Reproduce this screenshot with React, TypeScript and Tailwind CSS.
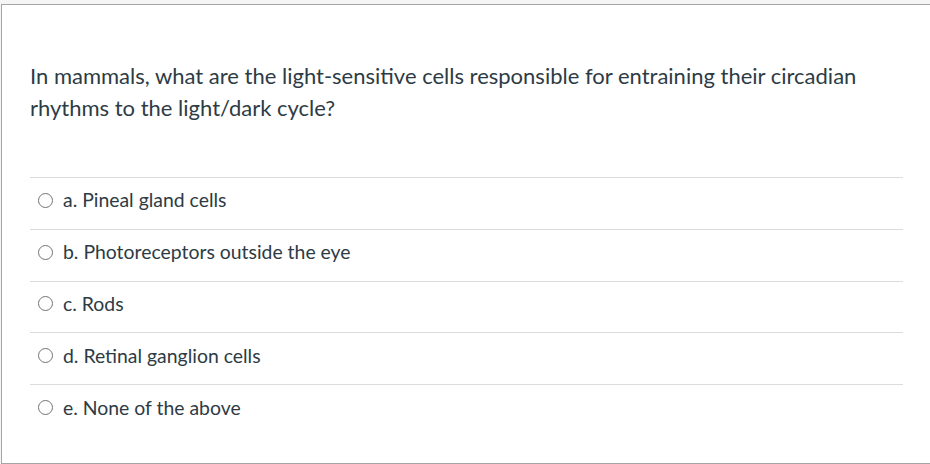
import React from 'react';

const options = [
  'a. Pineal gland cells',
  'b. Photoreceptors outside the eye',
  'c. Rods',
  'd. Retinal ganglion cells',
  'e. None of the above',
];

const App: React.FC = () => {
  return (
    <div className="w-[930px] h-[464px] bg-[#f5f5f5] pt-[4px] overflow-hidden" style={{ fontFamily: 'Lato, "Open Sans", sans-serif' }}>
      <div className="ml-[1px] h-[460px] bg-white border-l border-t border-b border-[#a5a5a5] pl-[28px] pr-[27px] text-[#2d3b45]">
        {/* Question text */}
        <div className="pt-[55px] pb-[53px] text-[22px] leading-[32px]">
          In mammals, what are the light-sensitive cells responsible for entraining their circadian rhythms to the light/dark cycle?
        </div>

        {/* Answers */}
        <div>
          {options.map((opt) => (
            <div key={opt} className="h-[51.8px] border-t border-[#dcdcdc] flex items-center gap-[10px] pl-[8px] pb-[6px]">
              <span className="w-[15px] h-[15px] rounded-full border border-[#737373] bg-white shrink-0" />
              <span className="text-[19.4px] leading-[24px]">{opt}</span>
            </div>
          ))}
        </div>
      </div>
    </div>
  );
};

export default App;
